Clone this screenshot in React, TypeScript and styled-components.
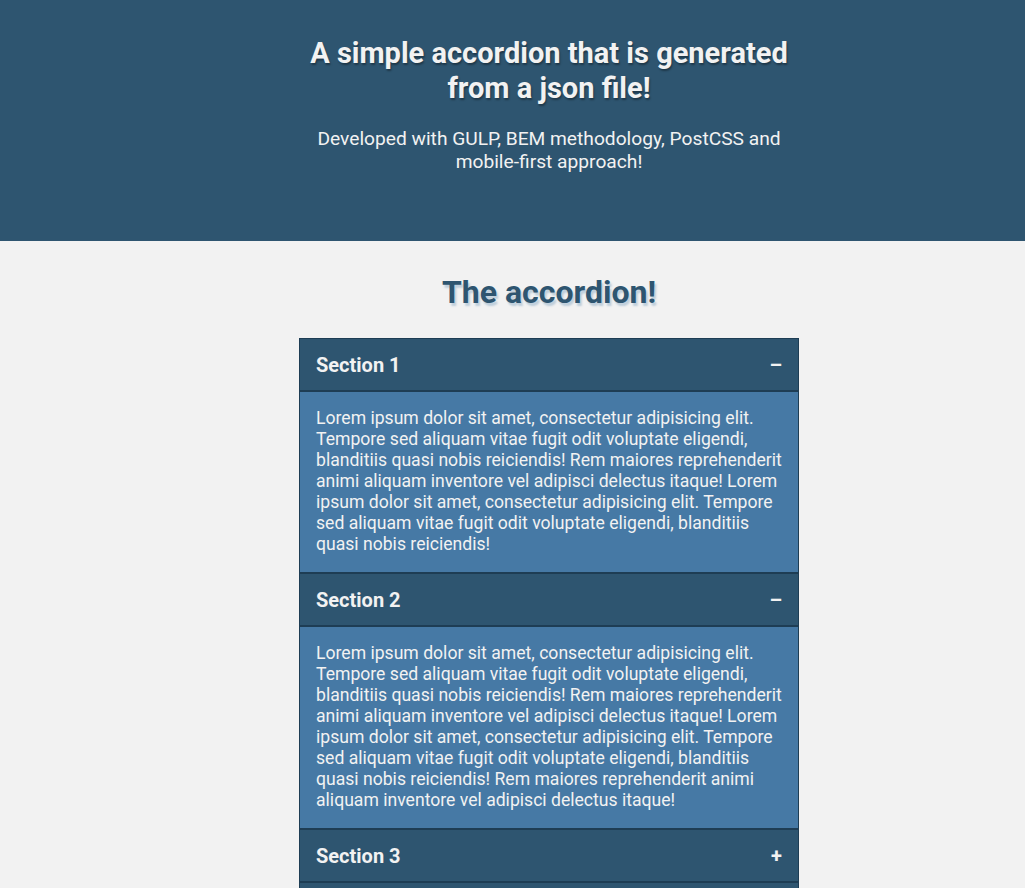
import React, { useState } from "react";
import styled, { createGlobalStyle } from "styled-components";

const GlobalStyle = createGlobalStyle`
  * {
    box-sizing: border-box;
  }
  body {
    margin: 0;
    background: #f2f2f2;
    font-family: Roboto, "Liberation Sans", sans-serif;
    color: #f2f2f2;
  }
`;

interface ISection {
  title: string;
  content: string;
}

const lorem =
  "Lorem ipsum dolor sit amet, consectetur adipisicing elit. Tempore sed aliquam vitae fugit odit voluptate eligendi, blanditiis quasi nobis reiciendis!";
const loremLong =
  "Rem maiores reprehenderit animi aliquam inventore vel adipisci delectus itaque!";

const sections: ISection[] = [
  { title: "Section 1", content: `${lorem} ${loremLong} ${lorem}` },
  { title: "Section 2", content: `${lorem} ${loremLong} ${lorem} ${loremLong}` },
  { title: "Section 3", content: `${lorem} ${loremLong}` },
  { title: "Section 4", content: lorem },
];

export default function App() {
  const [open, setOpen] = useState<boolean[]>([true, true, false, false]);

  const toggle = (i: number) =>
    setOpen((prev) => prev.map((v, idx) => (idx === i ? !v : v)));

  return (
    <>
      <GlobalStyle />
      <HeaderSC>
        <TitleSC>A simple accordion that is generated from a json file!</TitleSC>
        <SubtitleSC>
          Developed with GULP, BEM methodology, PostCSS and mobile-first
          approach!
        </SubtitleSC>
      </HeaderSC>
      <MainSC>
        <HeadingSC>The accordion!</HeadingSC>
        <AccordionSC>
          {sections.map((s, i) => (
            <ItemSC key={s.title}>
              <ItemHeaderSC onClick={() => toggle(i)}>
                <span>{s.title}</span>
                <SignSC>{open[i] ? "–" : "+"}</SignSC>
              </ItemHeaderSC>
              {open[i] && <ItemBodySC>{s.content}</ItemBodySC>}
            </ItemSC>
          ))}
        </AccordionSC>
      </MainSC>
    </>
  );
}

const HeaderSC = styled.header`
  background: #2e5570;
  height: 241px;
  padding: 36px 0 0 73px;
  display: flex;
  flex-direction: column;
  align-items: center;
  text-align: center;
`;

const TitleSC = styled.h1`
  margin: 0;
  max-width: 500px;
  font-size: 29px;
  line-height: 35px;
  font-weight: 700;
  color: #f2f2f2;
  text-shadow: 1px 2px 2px rgba(0, 0, 0, 0.35);
`;

const SubtitleSC = styled.p`
  margin: 21px 0 0;
  max-width: 480px;
  font-size: 19.2px;
  line-height: 23px;
  color: #f2f2f2;
`;

const MainSC = styled.main`
  display: flex;
  flex-direction: column;
  align-items: center;
  padding: 31px 0 0 73px;
`;

const HeadingSC = styled.h2`
  margin: 0 0 26px;
  font-size: 32px;
  line-height: 40px;
  font-weight: 700;
  color: #2e5570;
  text-shadow: 2px 3px 2px rgba(70, 121, 165, 0.3);
`;

const AccordionSC = styled.div`
  width: 500px;
  border: 1px solid #1e3d54;
  border-bottom: 0;
`;

const ItemSC = styled.div`
  display: flex;
  flex-direction: column;
`;

const ItemHeaderSC = styled.div`
  display: flex;
  justify-content: space-between;
  align-items: center;
  height: 53px;
  padding: 0 16px;
  background: #2e5570;
  border-bottom: 2px solid #1e3d54;
  font-size: 20px;
  font-weight: 700;
  cursor: pointer;
`;

const SignSC = styled.span`
  font-size: 20px;
  font-weight: 700;
`;

const ItemBodySC = styled.div`
  background: #4679a5;
  padding: 16px 16px 17px;
  font-size: 17.6px;
  line-height: 21px;
  border-bottom: 2px solid #1e3d54;
`;
